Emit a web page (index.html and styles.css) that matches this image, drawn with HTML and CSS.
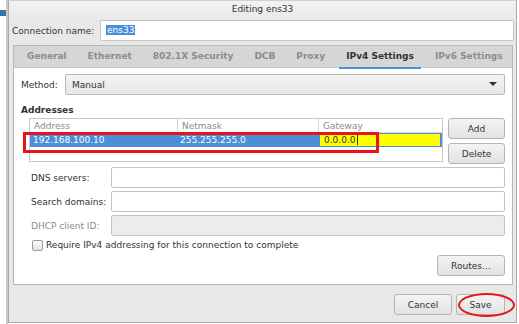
FILE: index.html
```html
<!DOCTYPE html>
<html lang="en">
  <head>
    <meta charset="UTF-8" />
    <title>Editing ens33</title>
    <link rel="stylesheet" href="styles.css">
  </head>
  <body>
    <div class="desk">
      <div class="desk-bar"></div>
    </div>

    <div class="dialog">
      <div class="titlebar">Editing ens33</div>

      <div class="name-row">
        <label>Connection name:</label>
        <div class="entry"><span class="sel">ens33</span></div>
      </div>

      <div class="notebook">
        <div class="tabs">
          <span class="tab">General</span>
          <span class="tab">Ethernet</span>
          <span class="tab">802.1X Security</span>
          <span class="tab">DCB</span>
          <span class="tab">Proxy</span>
          <span class="tab active">IPv4 Settings</span>
          <span class="tab">IPv6 Settings</span>
        </div>

        <div class="page">
          <div class="method-row">
            <label>Method:</label>
            <div class="combo">
              <span>Manual</span>
              <svg width="8" height="5" viewBox="0 0 8 5"><path d="M0 0h8L4 4z" fill="#2e3436"/></svg>
            </div>
          </div>

          <h4 class="section">Addresses</h4>

          <div class="addr-row">
            <div class="table">
              <div class="thead">
                <span class="c1">Address</span>
                <span class="c2">Netmask</span>
                <span class="c3">Gateway</span>
              </div>
              <div class="trow">
                <span class="c1">192.168.100.10</span>
                <span class="c2">255.255.255.0</span>
                <span class="c3 editing"><span class="gw">0.0.0.0</span></span>
              </div>
              <div class="mark-rect"></div>
            </div>
            <div class="side-btns">
              <button class="btn">Add</button>
              <button class="btn">Delete</button>
            </div>
          </div>

          <div class="form">
            <label>DNS servers:</label>
            <div class="entry"></div>
            <label>Search domains:</label>
            <div class="entry"></div>
            <label class="dim">DHCP client ID:</label>
            <div class="entry disabled"></div>
          </div>

          <div class="check-row">
            <span class="checkbox"></span>
            <span>Require IPv4 addressing for this connection to complete</span>
          </div>

          <div class="routes-row">
            <button class="btn routes">Routes…</button>
          </div>
        </div>
      </div>

      <div class="footer">
        <button class="btn cancel">Cancel</button>
        <button class="btn save">Save<span class="mark-oval"></span></button>
      </div>
    </div>
  </body>
</html>
```

FILE: styles.css
```css
* {
  margin: 0;
  padding: 0;
  box-sizing: border-box;
}

body {
  font-family: "DejaVu Sans", sans-serif;
  font-size: 9px;
  color: #2e3436;
  background: #ffffff;
  width: 519px;
  height: 324px;
  display: flex;
  overflow: hidden;
}

.desk {
  width: 8px;
  height: 324px;
  border-right: 2px solid #c8c8c8;
  padding-top: 10px;
}

.desk-bar {
  height: 6px;
  background: #3d6fa8;
}

.dialog {
  width: 509px;
  height: 323px;
  background: #e8e8e8;
  border: 1px solid #a8a8a8;
  border-top-color: #d0d0d0;
  display: flex;
  flex-direction: column;
}

.titlebar {
  height: 19px;
  line-height: 17px;
  text-align: center;
  color: #2e3436;
  background: linear-gradient(#f2f2f2, #e8e8e8);
}

.name-row {
  display: flex;
  align-items: center;
  padding: 0 2px 0 3px;
  height: 21px;
}

.name-row label {
  width: 88px;
}

.entry {
  flex: 1;
  height: 21px;
  background: #ffffff;
  border: 1px solid #c4c4c4;
  border-radius: 2px;
  padding: 4px 5px;
}

.entry.disabled {
  background: #ececec;
}

.sel {
  background: #4a90d9;
  color: #ffffff;
  padding: 0 1px;
}

.notebook {
  margin: 4px 3px 0 4px;
  border: 1px solid #b8b8b8;
}

.tabs {
  height: 21px;
  background: #d6d6d6;
  display: flex;
  padding-left: 13px;
  gap: 21px;
  font-weight: bold;
  color: #8c8c8c;
}

.tab {
  line-height: 20px;
}

.tab.active {
  color: #2e3436;
  box-shadow: 0 2px 0 0 #4a90d9;
  padding: 0 7px;
  margin: 0 -7px;
}

.page {
  background: #ffffff;
  height: 217px;
  padding: 6px 7px 0 7px;
  border-top: 1px solid #c4c4c4;
}

.method-row {
  display: flex;
  align-items: center;
}

.method-row label {
  width: 44px;
}

.combo {
  flex: 1;
  height: 21px;
  border: 1px solid #b8b8b8;
  border-radius: 2px;
  background: linear-gradient(#f4f4f4, #e6e6e6);
  display: flex;
  align-items: center;
  justify-content: space-between;
  padding: 0 7px 0 6px;
}

.section {
  font-size: 9px;
  margin: 10px 0 3px;
  font-weight: bold;
}

.addr-row {
  display: flex;
  gap: 5px;
}

.table {
  margin-left: 8px;
  width: 414px;
  height: 44px;
  border: 1px solid #c8c8c8;
  position: relative;
}

.thead,
.trow {
  display: flex;
  height: 14px;
  line-height: 14px;
}

.thead {
  color: #8c8c8c;
  border-bottom: 1px solid #d8d8d8;
}

.thead span {
  padding-left: 4px;
}

.thead .c2,
.thead .c3 {
  border-left: 1px solid #d8d8d8;
}

.trow {
  background: #4a90d9;
  color: #ffffff;
}

.trow span {
  padding-left: 3px;
}

.c1 { width: 147px; }
.c2 { width: 141px; }
.c3 { flex: 1; }

.trow .editing {
  background: #ffff00;
  color: #2e3436;
  margin: 1px 2px 1px 2px;
  padding-left: 1px;
  line-height: 12px;
  box-shadow: 0 0 0 1px #4a90d9;
}

.gw {
  border-right: 1px solid #2e3436;
  padding-right: 1px;
}

.mark-rect {
  position: absolute;
  left: -7px;
  top: 13px;
  width: 356px;
  height: 21px;
  border: 3px solid #e8141c;
}

.side-btns {
  display: flex;
  flex-direction: column;
  gap: 4px;
}

.btn {
  font-family: "DejaVu Sans", sans-serif;
  font-size: 9px;
  color: #2e3436;
  height: 21px;
  border: 1px solid #b4b4b4;
  border-radius: 3px;
  background: linear-gradient(#f4f4f4, #e2e2e2);
}

.side-btns .btn {
  width: 57px;
}

.form {
  display: grid;
  grid-template-columns: 80px 1fr;
  row-gap: 3px;
  align-items: center;
  margin: 3px 0 0 10px;
}

.form .entry {
  height: 21px;
}

.dim {
  color: #8c8c8c;
}

.check-row {
  display: flex;
  align-items: center;
  gap: 3px;
  margin: 3px 0 0 11px;
  height: 12px;
}

.checkbox {
  width: 11px;
  height: 11px;
  border: 1px solid #9c9c9c;
  border-radius: 2px;
  background: linear-gradient(#fafafa, #e4e4e4);
}

.routes-row {
  display: flex;
  justify-content: flex-end;
  margin-top: 4px;
}

.routes {
  width: 68px;
}

.footer {
  flex: 1;
  display: flex;
  justify-content: flex-end;
  gap: 4px;
  padding: 9px 11px 0 0;
}

.cancel {
  width: 58px;
}

.save {
  width: 49px;
  position: relative;
}

.mark-oval {
  position: absolute;
  left: 1px;
  top: -2px;
  width: 57px;
  height: 24px;
  border: 2px solid #e8141c;
  border-radius: 50%;
}
```
